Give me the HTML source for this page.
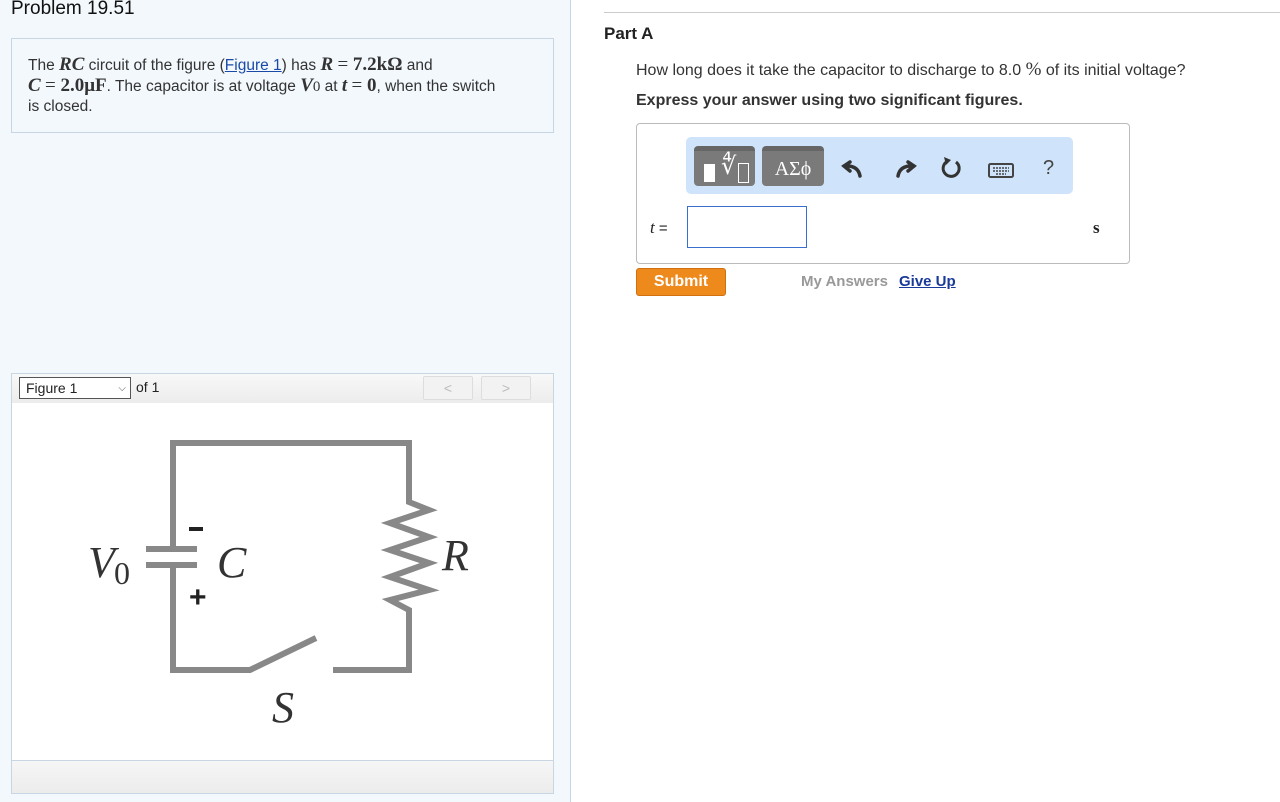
<!DOCTYPE html>
<html><head><style>
body{margin:0;width:1280px;height:802px;background:#fff;font-family:"Liberation Sans",sans-serif;position:relative;overflow:hidden;color:#222}
.left{position:absolute;left:0;top:0;width:570px;height:802px;background:#f3f8fd;border-right:1px solid #c8d6e4}
.abs{position:absolute}
.m{font-family:"Liberation Serif",serif;font-size:19px}
.mi{font-family:"Liberation Serif",serif;font-style:italic;font-size:19px}
</style></head><body>
<div class="left">
<div class="abs" style="left:11px;top:-2px;font-size:19px;color:#111">Problem 19.51</div>
<div class="abs" style="left:11px;top:38px;width:541px;height:93px;border:1px solid #c8d6e4;background:#f3f8fd"></div>
<div class="abs" style="left:28px;top:55px;width:520px;font-size:15.5px;line-height:20px;color:#333;white-space:nowrap">The <span class="mi" style="font-weight:bold">RC</span> circuit of the figure (<span style="color:#1a4aa8;text-decoration:underline">Figure 1</span>) has <b class="mi">R</b> <span class="m">= <b>7.2kΩ</b></span> and<br><b class="mi">C</b> <span class="m">= <b>2.0μF</b></span>. The capacitor is at voltage <b class="mi">V</b><span class="m" style="font-size:15px">0</span> at <b class="mi">t</b> <span class="m">= <b>0</b></span>, when the switch<br>is closed.</div>
<div class="abs" style="left:11px;top:373px;width:541px;height:30px;background:linear-gradient(#f8f8f8,#ececec);border:1px solid #c8d6e4"></div>
<div class="abs" style="left:19px;top:377px;width:112px;height:22px;border:1px solid #555;background:#fff;font-size:14px;line-height:21px;padding-left:6px;box-sizing:border-box">Figure 1<span style="position:absolute;right:4px;top:0;font-size:10px;color:#555">⌵</span></div>
<div class="abs" style="left:136px;top:379px;font-size:14px">of 1</div>
<div class="abs" style="left:423px;top:376px;width:48px;height:22px;border:1px solid #ddd;border-radius:2px;background:#f2f2f2;color:#bbb;text-align:center;font-size:14px;line-height:22px">&lt;</div>
<div class="abs" style="left:481px;top:376px;width:48px;height:22px;border:1px solid #ddd;border-radius:2px;background:#f2f2f2;color:#bbb;text-align:center;font-size:14px;line-height:22px">&gt;</div>
<div class="abs" style="left:11px;top:403px;width:541px;height:357px;background:#fff;border-left:1px solid #c8d6e4;border-right:1px solid #c8d6e4"></div>
<div class="abs" style="left:11px;top:760px;width:541px;height:32px;background:linear-gradient(#f6f6f6,#ececec);border:1px solid #c8d6e4"></div>
<svg class="abs" style="left:0;top:0" width="570" height="802">
<g stroke="#888" stroke-width="6" fill="none" stroke-linejoin="miter">
<polyline points="173,549 173,443 409,443 409,502 429,510 390,523 429,537 390,550 429,563 390,577 429,590 390,600 409,610 409,670 333,670"/>
<polyline points="173,565 173,670 250,670 316,638"/>
<line x1="146" y1="549" x2="197" y2="549"/><line x1="146" y1="565" x2="197" y2="565"/>
</g>
<g font-family="Liberation Serif,serif" font-style="italic" font-size="44" fill="#333">
<text x="88" y="577">V</text><text x="217" y="577">C</text><text x="442" y="570">R</text><text x="272" y="722">S</text>
</g>
<text x="114" y="584" font-family="Liberation Serif,serif" font-size="32" fill="#333">0</text>
<rect x="189" y="527" width="14" height="4" fill="#222"/>
<text x="189" y="607" font-family="Liberation Sans,sans-serif" font-size="30" font-weight="bold" fill="#222">+</text>
</svg>
</div>
<div class="abs" style="left:604px;top:12px;width:676px;height:1px;background:#ccc"></div>
<div class="abs" style="left:604px;top:24px;font-size:17px;font-weight:bold;color:#222">Part A</div>
<div class="abs" style="left:636px;top:59px;font-size:16px;color:#333;white-space:nowrap">How long does it take the capacitor to discharge to 8.0 <span class="m">%</span> of its initial voltage?</div>
<div class="abs" style="left:636px;top:92px;font-size:16px;font-weight:bold;color:#333;white-space:nowrap">Express your answer using two significant figures.</div>
<div class="abs" style="left:636px;top:123px;width:492px;height:139px;border:1px solid #bbb;border-radius:4px;background:#fff"></div>
<div class="abs" style="left:686px;top:137px;width:387px;height:57px;background:#cfe4fa;border-radius:5px"></div>
<div class="abs" style="left:694px;top:146px;width:61px;height:40px;border-radius:4px;background:linear-gradient(#666 0,#666 5px,#7a7a7a 5px);"><div class="abs" style="left:10px;top:18px;width:11px;height:18px;background:#fff"></div><div class="abs" style="left:27px;top:6px;color:#fff;font-family:'Liberation Serif',serif;font-size:24px">∜</div><div class="abs" style="left:44px;top:17px;width:9px;height:18px;border:1px solid #fff"></div></div>
<div class="abs" style="left:762px;top:146px;width:62px;height:40px;border-radius:4px;background:linear-gradient(#666 0,#666 5px,#7a7a7a 5px);color:#fff;font-family:'Liberation Serif',serif;font-size:20px;text-align:center;line-height:46px">ΑΣϕ</div>
<svg class="abs" style="left:840px;top:152px" width="190" height="32">
<path d="M10 10 L4 14 L10 19 M4 14 Q18 13 20 24" stroke="#333" stroke-width="3.5" fill="none" stroke-linecap="round"/>
<path d="M68 10 L74 14 L68 19 M74 14 Q60 13 58 24" stroke="#333" stroke-width="3.5" fill="none" stroke-linecap="round"/>
<path d="M108 9 A8 8 0 1 0 116 10" stroke="#333" stroke-width="3" fill="none"/><path d="M104 5 L111 8 L106 13Z" fill="#333"/>
<rect x="149" y="12" width="24" height="13" rx="1.5" fill="none" stroke="#444" stroke-width="2"/>
<path d="M153 16h16M153 19h16M156 22h10" stroke="#444" stroke-width="1.5" stroke-dasharray="2 1"/>
</svg>
<div class="abs" style="left:1043px;top:157px;font-size:20px;color:#444">?</div>
<div class="abs" style="left:650px;top:218px;font-size:15px"><span class="mi" style="font-size:17px">t</span> =</div>
<div class="abs" style="left:687px;top:206px;width:118px;height:40px;border:1px solid #3a6fd0;background:#fff"></div>
<div class="abs" style="left:1093px;top:218px" ><span class="m" style="font-size:17px;font-weight:bold">s</span></div>
<div class="abs" style="left:636px;top:268px;width:88px;height:26px;background:#ee8a1c;border:1px solid #d07010;border-radius:3px;color:#fff;font-weight:bold;font-size:16px;text-align:center;line-height:26px">Submit</div>
<div class="abs" style="left:801px;top:273px;font-size:15px;font-weight:bold;color:#999">My Answers</div>
<div class="abs" style="left:899px;top:273px;font-size:15px;font-weight:bold;color:#1a3a9a;text-decoration:underline">Give Up</div>
</body></html>
